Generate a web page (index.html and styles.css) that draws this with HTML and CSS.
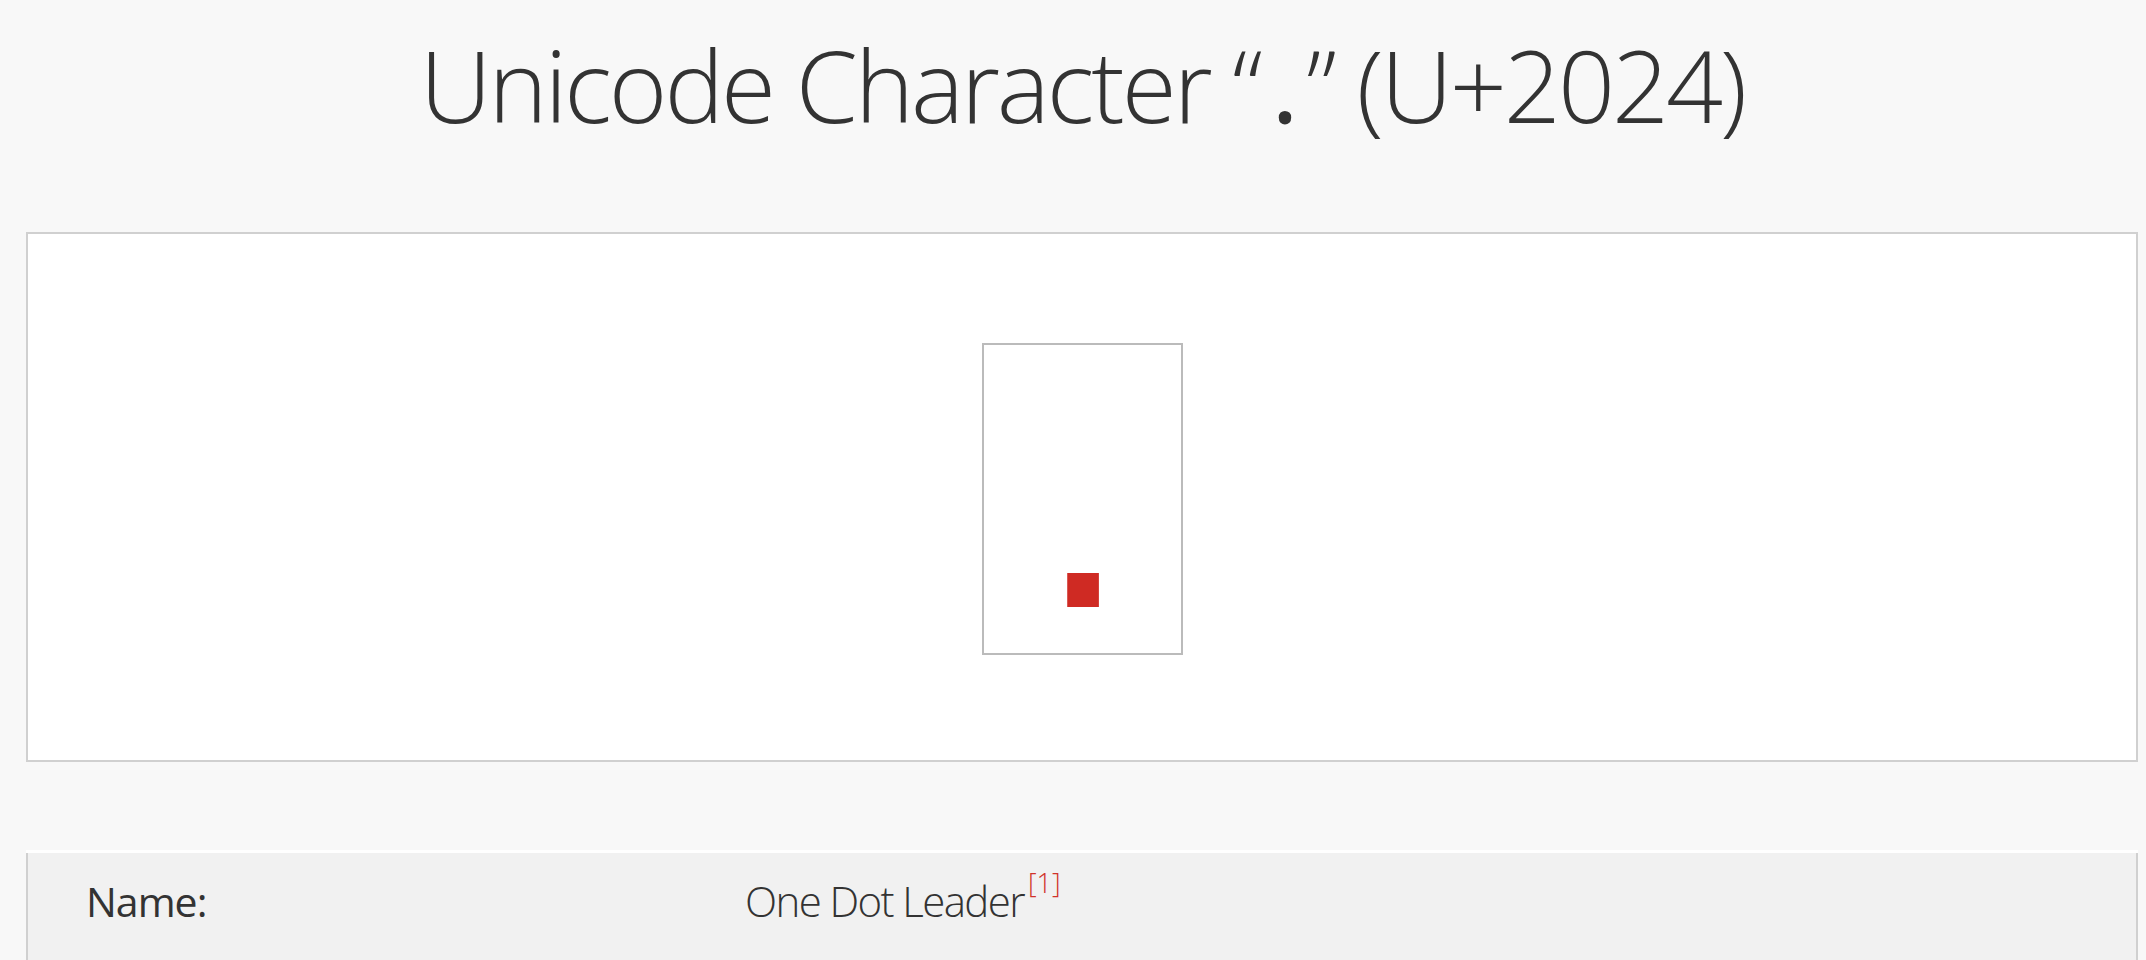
FILE: index.html
```html
<!DOCTYPE html>
<html>
<head>
    <title>Unicode Character “․” (U+2024)</title>
    <meta name="viewport" content="width=device-width, initial-scale=1">
    <link rel="stylesheet" href="styles.css">
</head>
<body>
    <h1 class="title">Unicode Character “․” (U+2024)</h1>

    <div class="preview">
        <div class="glyph">․</div>
    </div>

    <table class="info">
        <tr>
            <th>Name:</th>
            <td>One Dot Leader<sup class="ref">[1]</sup></td>
        </tr>
    </table>
</body>
</html>
```

FILE: styles.css
```css
body {
    margin: 0 8px 0 26px;
    background: #f8f8f8;
    color: #333;
    font-family: "Open Sans", sans-serif;
}
.title {
    margin: 24px 0 88px;
    font-size: 100px;
    font-weight: 300;
    line-height: 120px;
    letter-spacing: -3px;
    text-align: center;
}
.preview {
    display: flex;
    justify-content: center;
    padding: 109px 0 105px;
    background: #fff;
    border: 2px solid #d0d0d0;
}
.glyph {
    display: flex;
    align-items: flex-end;
    justify-content: center;
    box-sizing: border-box;
    width: 201px;
    height: 312px;
    padding: 0 0 18px 2px;
    border: 2px solid #bbb;
    color: #cf2a23;
    font-family: "DejaVu Sans", sans-serif;
    font-size: 180px;
    font-weight: 700;
    line-height: 1;
}
.info {
    width: 100%;
    margin-top: 88px;
    border-collapse: collapse;
    border: 2px solid #d0d0d0;
}
.info tr {
    background: #f1f1f1;
    border-top: 3px solid #fff;
}
.info th,
.info td {
    padding: 18px 0 30px;
    font-size: 42px;
    line-height: 60px;
    text-align: left;
    vertical-align: top;
}
.info th {
    width: 659px;
    padding-left: 58px;
    font-size: 41px;
    font-weight: 500;
    letter-spacing: -1px;
}
.info td {
    font-weight: 300;
    letter-spacing: -1.6px;
}
.ref {
    color: #d0332b;
    font-size: 27px;
    line-height: 0;
    letter-spacing: 0;
    vertical-align: 24px;
    margin-left: 4px;
}
```
